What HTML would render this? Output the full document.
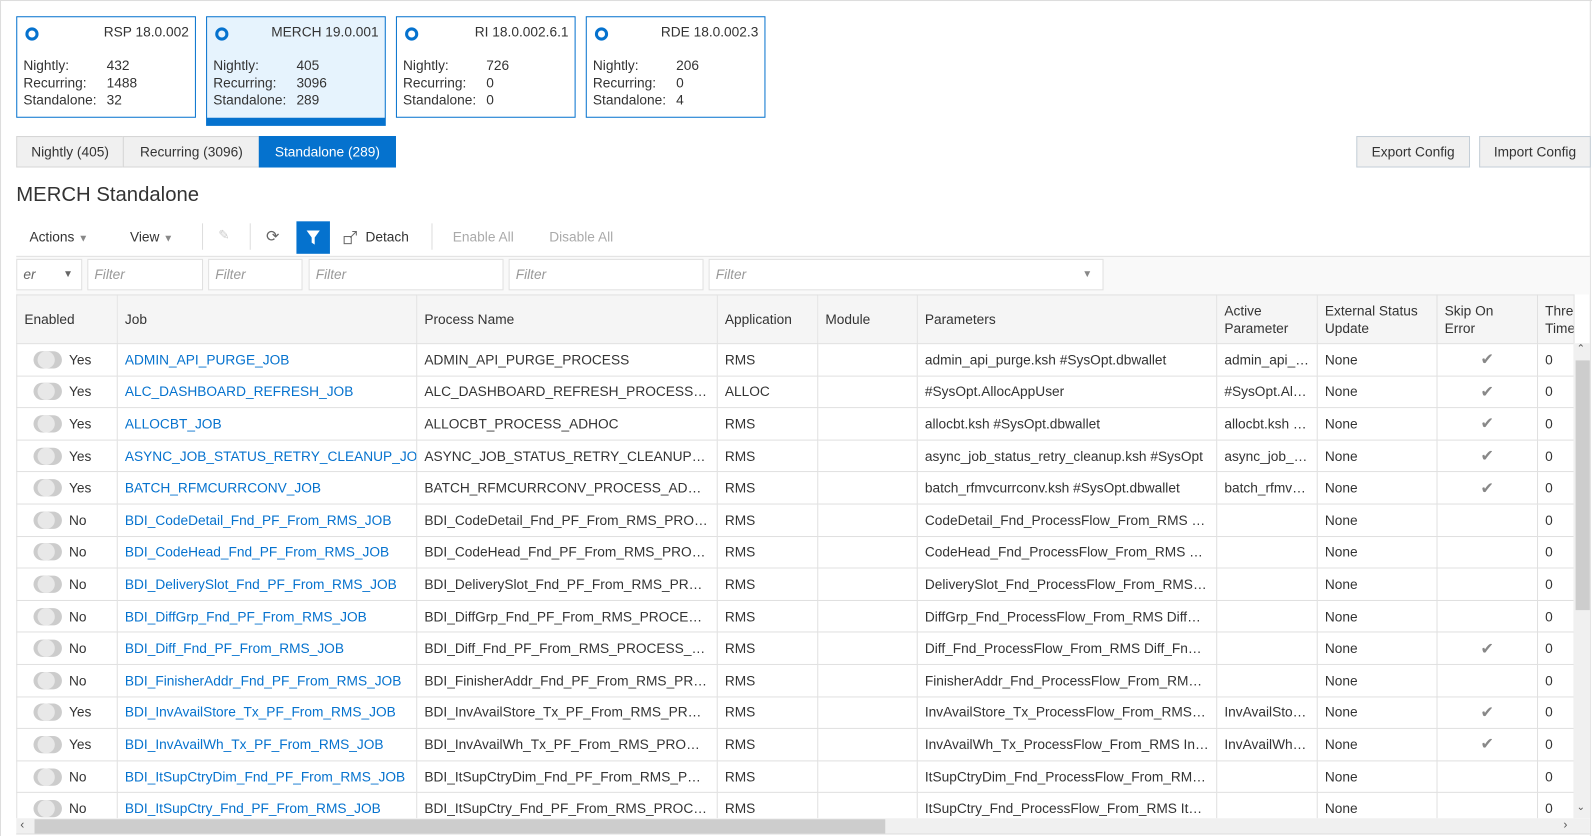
<!DOCTYPE html>
<html><head><meta charset="utf-8"><style>
*{box-sizing:border-box;margin:0;padding:0}
html,body{width:1592px;height:836px;overflow:hidden}
body{background:#fff;font-family:"Liberation Sans",Arial,sans-serif;font-size:13.5px;color:#333;position:relative}
#w{position:absolute;left:0;top:0;width:1592px;height:836px;transform:scale(1.0152);transform-origin:0 0}
.a{position:absolute;white-space:nowrap}
.card{position:absolute;top:16px;width:177px;height:100px;border:1px solid #0572ce;background:#fff;color:#333}
.card.sel{background:#e6f3fd;height:108px;border-bottom:8px solid #0572ce}
.card .r{position:absolute;left:8px;top:10px;width:13px;height:13px;border:3px solid #0572ce;border-radius:50%}
.card .t{position:absolute;right:6px;top:7px}
.card .l{position:absolute;left:6px;top:39px;line-height:17px}
.card .v{position:absolute;left:88px;top:39px;line-height:17px}
.tab{position:absolute;top:134px;height:31px;line-height:30px;border:1px solid #d6d6d6;background:#f0f0f0;text-align:center;color:#333;white-space:nowrap}
.btn{position:absolute;top:134px;height:31px;line-height:29px;border:1px solid #c4ced7;background:#f0f0f0;text-align:center;color:#333;white-space:nowrap}
.fi{position:absolute;top:255px;height:31px;border:1px solid #e0e0e0;background:#fff;color:#999;font-style:italic;padding:7px 6px}
table{position:absolute;left:16px;top:290px;border-collapse:collapse;table-layout:fixed;width:1534px}
td,th{border:1px solid #e0e0e0;white-space:nowrap;overflow:hidden;text-overflow:ellipsis;padding:0 7px;height:31.6px;font-weight:normal;text-align:left}
th{background:#f5f5f5;height:48px;line-height:17px}
td.c,th.c{text-overflow:clip}
a{color:#0572ce;text-decoration:none}
.e{padding:0}
.e div{display:flex;align-items:center}
.tg{display:inline-block;width:28px;height:17px;border-radius:9px;background:#ccc;margin:0 7px 0 16px;position:relative}
.tg:after{content:"";position:absolute;left:4px;top:0;width:17px;height:17px;border-radius:50%;background:#e8e8e8}
.ck{text-align:center;color:#888;font-size:16px}
</style></head><body><div id="w">
<div class="a" style="left:0;top:0;width:1592px;height:1px;background:#ddd"></div>
<div class="a" style="left:0;top:0;width:1px;height:836px;background:#ddd"></div>
<div class="a" style="left:1566px;top:0;width:1px;height:836px;background:#ddd"></div>

<div class="card" style="left:16px"><div class="r"></div><div class="t">RSP 18.0.002</div><div class="l">Nightly:<br>Recurring:<br>Standalone:</div><div class="v">432<br>1488<br>32</div></div>
<div class="card sel" style="left:203px"><div class="r"></div><div class="t">MERCH 19.0.001</div><div class="l">Nightly:<br>Recurring:<br>Standalone:</div><div class="v">405<br>3096<br>289</div></div>
<div class="card" style="left:390px"><div class="r"></div><div class="t">RI 18.0.002.6.1</div><div class="l">Nightly:<br>Recurring:<br>Standalone:</div><div class="v">726<br>0<br>0</div></div>
<div class="card" style="left:577px"><div class="r"></div><div class="t">RDE 18.0.002.3</div><div class="l">Nightly:<br>Recurring:<br>Standalone:</div><div class="v">206<br>0<br>4</div></div>

<div class="tab" style="left:16px;width:106px">Nightly (405)</div>
<div class="tab" style="left:121px;width:135px">Recurring (3096)</div>
<div class="tab" style="left:255px;width:135px;background:#0572ce;border-color:#0572ce;color:#fff">Standalone (289)</div>
<div class="btn" style="left:1336px;width:112px">Export Config</div>
<div class="btn" style="left:1457px;width:110px">Import Config</div>

<div class="a" style="left:16px;top:181px;font-size:20px;color:#333">MERCH Standalone</div>

<div class="a" style="left:29px;top:226px">Actions <span style="color:#888;font-size:10px">&#9660;</span></div>
<div class="a" style="left:128px;top:226px">View <span style="color:#888;font-size:10px">&#9660;</span></div>
<div class="a" style="left:199px;top:220px;width:1px;height:26px;background:#ddd"></div>
<div class="a" style="left:215px;top:224px;color:#ccc">&#9998;</div>
<div class="a" style="left:246px;top:220px;width:1px;height:26px;background:#ddd"></div>
<div class="a" style="left:262px;top:223px;color:#666;font-size:16px">&#10227;</div>
<div class="a" style="left:292px;top:218px;width:33px;height:32px;background:#0572ce"><svg width="33" height="32"><path d="M10 9h13l-5 7v7l-3-2v-5z" fill="#fff"/></svg></div>
<div class="a" style="left:338px;top:226px"><svg width="16" height="16"><rect x="1" y="7" width="7" height="7" fill="none" stroke="#666"/><path d="M7 8l6-6M9 2h4v4" stroke="#666" fill="none"/></svg></div>
<div class="a" style="left:360px;top:226px;color:#333">Detach</div>
<div class="a" style="left:425px;top:220px;width:1px;height:26px;background:#ddd"></div>
<div class="a" style="left:446px;top:226px;color:#aaa">Enable All</div>
<div class="a" style="left:541px;top:226px;color:#aaa">Disable All</div>

<div class="a" style="left:16px;top:252px;width:1550px;height:38px;background:#f9f9f9;border-top:1px solid #e0e0e0"></div>
<div class="fi" style="left:16px;width:65px;color:#666">er<span style="position:absolute;right:8px;top:9px;font-style:normal;font-size:10px;color:#666">&#9660;</span></div>
<div class="fi" style="left:86px;width:114px">Filter</div>
<div class="fi" style="left:205px;width:93px">Filter</div>
<div class="fi" style="left:304px;width:192px">Filter</div>
<div class="fi" style="left:501px;width:192px">Filter</div>
<div class="fi" style="left:698px;width:389px">Filter<span style="position:absolute;right:10px;top:9px;font-style:normal;font-size:10px;color:#888">&#9660;</span></div>

<table>
<colgroup><col style="width:99px"><col style="width:295px"><col style="width:296px"><col style="width:99px"><col style="width:98px"><col style="width:295px"><col style="width:99px"><col style="width:118px"><col style="width:99px"><col style="width:36px"></colgroup>
<tr><th>Enabled</th><th>Job</th><th>Process Name</th><th>Application</th><th>Module</th><th>Parameters</th><th>Active<br>Parameter</th><th>External Status<br>Update</th><th>Skip On<br>Error</th><th class="c">Thre<br>Time</th></tr>
<tr><td class="e"><div><span class="tg"></span>Yes</div></td><td class="c"><a>ADMIN_API_PURGE_JOB</a></td><td>ADMIN_API_PURGE_PROCESS</td><td>RMS</td><td></td><td>admin_api_purge.ksh #SysOpt.dbwallet</td><td>admin_api_purge</td><td>None</td><td class="ck">&#10004;</td><td>0</td></tr>
<tr><td class="e"><div><span class="tg"></span>Yes</div></td><td class="c"><a>ALC_DASHBOARD_REFRESH_JOB</a></td><td>ALC_DASHBOARD_REFRESH_PROCESS_ADHOC</td><td>ALLOC</td><td></td><td>#SysOpt.AllocAppUser</td><td>#SysOpt.AllocApp</td><td>None</td><td class="ck">&#10004;</td><td>0</td></tr>
<tr><td class="e"><div><span class="tg"></span>Yes</div></td><td class="c"><a>ALLOCBT_JOB</a></td><td>ALLOCBT_PROCESS_ADHOC</td><td>RMS</td><td></td><td>allocbt.ksh #SysOpt.dbwallet</td><td>allocbt.ksh #Sys</td><td>None</td><td class="ck">&#10004;</td><td>0</td></tr>
<tr><td class="e"><div><span class="tg"></span>Yes</div></td><td class="c"><a>ASYNC_JOB_STATUS_RETRY_CLEANUP_JOB</a></td><td>ASYNC_JOB_STATUS_RETRY_CLEANUP_PROCESS</td><td>RMS</td><td></td><td>async_job_status_retry_cleanup.ksh #SysOpt</td><td>async_job_status</td><td>None</td><td class="ck">&#10004;</td><td>0</td></tr>
<tr><td class="e"><div><span class="tg"></span>Yes</div></td><td class="c"><a>BATCH_RFMCURRCONV_JOB</a></td><td>BATCH_RFMCURRCONV_PROCESS_ADHOC</td><td>RMS</td><td></td><td>batch_rfmvcurrconv.ksh #SysOpt.dbwallet</td><td>batch_rfmvcurr</td><td>None</td><td class="ck">&#10004;</td><td>0</td></tr>
<tr><td class="e"><div><span class="tg"></span>No</div></td><td class="c"><a>BDI_CodeDetail_Fnd_PF_From_RMS_JOB</a></td><td>BDI_CodeDetail_Fnd_PF_From_RMS_PROCESS</td><td>RMS</td><td></td><td>CodeDetail_Fnd_ProcessFlow_From_RMS CodeDetail</td><td></td><td>None</td><td></td><td>0</td></tr>
<tr><td class="e"><div><span class="tg"></span>No</div></td><td class="c"><a>BDI_CodeHead_Fnd_PF_From_RMS_JOB</a></td><td>BDI_CodeHead_Fnd_PF_From_RMS_PROCESS</td><td>RMS</td><td></td><td>CodeHead_Fnd_ProcessFlow_From_RMS CodeHead</td><td></td><td>None</td><td></td><td>0</td></tr>
<tr><td class="e"><div><span class="tg"></span>No</div></td><td class="c"><a>BDI_DeliverySlot_Fnd_PF_From_RMS_JOB</a></td><td>BDI_DeliverySlot_Fnd_PF_From_RMS_PROCESS</td><td>RMS</td><td></td><td>DeliverySlot_Fnd_ProcessFlow_From_RMS Deliv</td><td></td><td>None</td><td></td><td>0</td></tr>
<tr><td class="e"><div><span class="tg"></span>No</div></td><td class="c"><a>BDI_DiffGrp_Fnd_PF_From_RMS_JOB</a></td><td>BDI_DiffGrp_Fnd_PF_From_RMS_PROCESS_ADHOC</td><td>RMS</td><td></td><td>DiffGrp_Fnd_ProcessFlow_From_RMS DiffGrp</td><td></td><td>None</td><td></td><td>0</td></tr>
<tr><td class="e"><div><span class="tg"></span>No</div></td><td class="c"><a>BDI_Diff_Fnd_PF_From_RMS_JOB</a></td><td>BDI_Diff_Fnd_PF_From_RMS_PROCESS_ADHOC</td><td>RMS</td><td></td><td>Diff_Fnd_ProcessFlow_From_RMS Diff_Fnd_Pro</td><td></td><td>None</td><td class="ck">&#10004;</td><td>0</td></tr>
<tr><td class="e"><div><span class="tg"></span>No</div></td><td class="c"><a>BDI_FinisherAddr_Fnd_PF_From_RMS_JOB</a></td><td>BDI_FinisherAddr_Fnd_PF_From_RMS_PROCESS</td><td>RMS</td><td></td><td>FinisherAddr_Fnd_ProcessFlow_From_RMS Fin</td><td></td><td>None</td><td></td><td>0</td></tr>
<tr><td class="e"><div><span class="tg"></span>Yes</div></td><td class="c"><a>BDI_InvAvailStore_Tx_PF_From_RMS_JOB</a></td><td>BDI_InvAvailStore_Tx_PF_From_RMS_PROCESS</td><td>RMS</td><td></td><td>InvAvailStore_Tx_ProcessFlow_From_RMS InvAv</td><td>InvAvailStore_Tx</td><td>None</td><td class="ck">&#10004;</td><td>0</td></tr>
<tr><td class="e"><div><span class="tg"></span>Yes</div></td><td class="c"><a>BDI_InvAvailWh_Tx_PF_From_RMS_JOB</a></td><td>BDI_InvAvailWh_Tx_PF_From_RMS_PROCESS</td><td>RMS</td><td></td><td>InvAvailWh_Tx_ProcessFlow_From_RMS InvAvail</td><td>InvAvailWh_Tx</td><td>None</td><td class="ck">&#10004;</td><td>0</td></tr>
<tr><td class="e"><div><span class="tg"></span>No</div></td><td class="c"><a>BDI_ItSupCtryDim_Fnd_PF_From_RMS_JOB</a></td><td>BDI_ItSupCtryDim_Fnd_PF_From_RMS_PROCESS</td><td>RMS</td><td></td><td>ItSupCtryDim_Fnd_ProcessFlow_From_RMS ItSup</td><td></td><td>None</td><td></td><td>0</td></tr>
<tr><td class="e"><div><span class="tg"></span>No</div></td><td class="c"><a>BDI_ItSupCtry_Fnd_PF_From_RMS_JOB</a></td><td>BDI_ItSupCtry_Fnd_PF_From_RMS_PROCESS</td><td>RMS</td><td></td><td>ItSupCtry_Fnd_ProcessFlow_From_RMS ItSupCtry</td><td></td><td>None</td><td></td><td>0</td></tr>
</table>

<div class="a" style="left:1550px;top:338px;width:16px;height:468px;background:#f0f0f0"></div>
<div class="a" style="left:1552px;top:355px;width:14px;height:246px;background:#cdcdcd"></div>
<div class="a" style="left:1553px;top:338px;font-size:10px;color:#555">&#8963;</div>
<div class="a" style="left:1553px;top:790px;font-size:10px;color:#555">&#8964;</div>
<div class="a" style="left:1px;top:806px;width:1565px;height:30px;background:#fff"></div>
<div class="a" style="left:16px;top:806px;width:1550px;height:16px;background:#f0f0f0;border-bottom:1px solid #ddd"></div>
<div class="a" style="left:34px;top:807px;width:838px;height:14px;background:#cdcdcd"></div>
<div class="a" style="left:20px;top:805px;font-size:12px;color:#555">&#8249;</div>
<div class="a" style="left:1540px;top:805px;font-size:12px;color:#555">&#8250;</div>
</div></body></html>
